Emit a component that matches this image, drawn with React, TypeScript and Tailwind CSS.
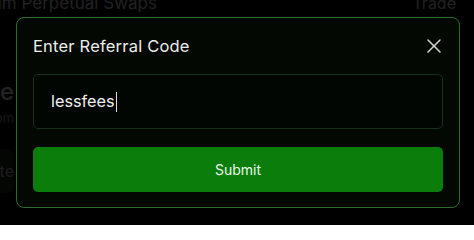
import { X } from "lucide-react";

export default function App() {
  return (
    <div className="relative w-[474px] h-[225px] overflow-hidden bg-[#050605] font-['Inter',sans-serif]">
      {/* page behind the dialog */}
      <div className="flex items-start justify-between pr-[18px] -mt-[9px]">
        <span className="-ml-[60px] text-[17px] text-[#d9d9d9]">Ethereum Perpetual Swaps</span>
        <span className="text-[16px] text-[#d9d9d9]">Trade</span>
      </div>
      <div className="-ml-[100px] mt-[60px] flex w-[114px] flex-col items-end">
        <span className="text-[24px] font-medium leading-[30px] text-[#e5e5e5]">Trade</span>
        <span className="mt-[2px] text-[13px] leading-[18px] text-[#999]">from</span>
        <div className="mt-[22px] flex h-[44px] w-[114px] items-center justify-end rounded-md bg-[#1c2a1c] pr-[0px]">
          <span className="text-[16px] text-[#bbb]">Update</span>
        </div>
      </div>

      {/* overlay */}
      <div className="absolute inset-0 bg-black/85" />

      {/* dialog */}
      <div className="absolute left-[16px] top-[17px] w-[444px] rounded-[8px] border border-[#2d6b2d] bg-[#030803] px-[16px] pt-[16px] pb-[15px]">
        <div className="flex h-[24px] items-center justify-between">
          <h3 className="text-[16.5px] text-[#ececec] tracking-[0.2px]">Enter Referral Code</h3>
          <button className="-mr-[3px] text-[#d4d4d4]">
            <X size={24} strokeWidth={1.5} />
          </button>
        </div>
        <div className="mt-[16px] flex h-[55px] items-center rounded-[5px] border border-[#17301a] bg-[#020602] px-[17px]">
          <span className="text-[16.25px] text-[#f0f0f0]">lessfees</span>
          <span className="ml-[1px] h-[20px] w-[1px] bg-[#dcdcdc]" />
        </div>
        <button className="mt-[18px] flex h-[45px] w-full items-center justify-center rounded-[5px] bg-[#0a7d0a] text-[14px] text-[#e8f8e8]">
          Submit
        </button>
      </div>
    </div>
  );
}
